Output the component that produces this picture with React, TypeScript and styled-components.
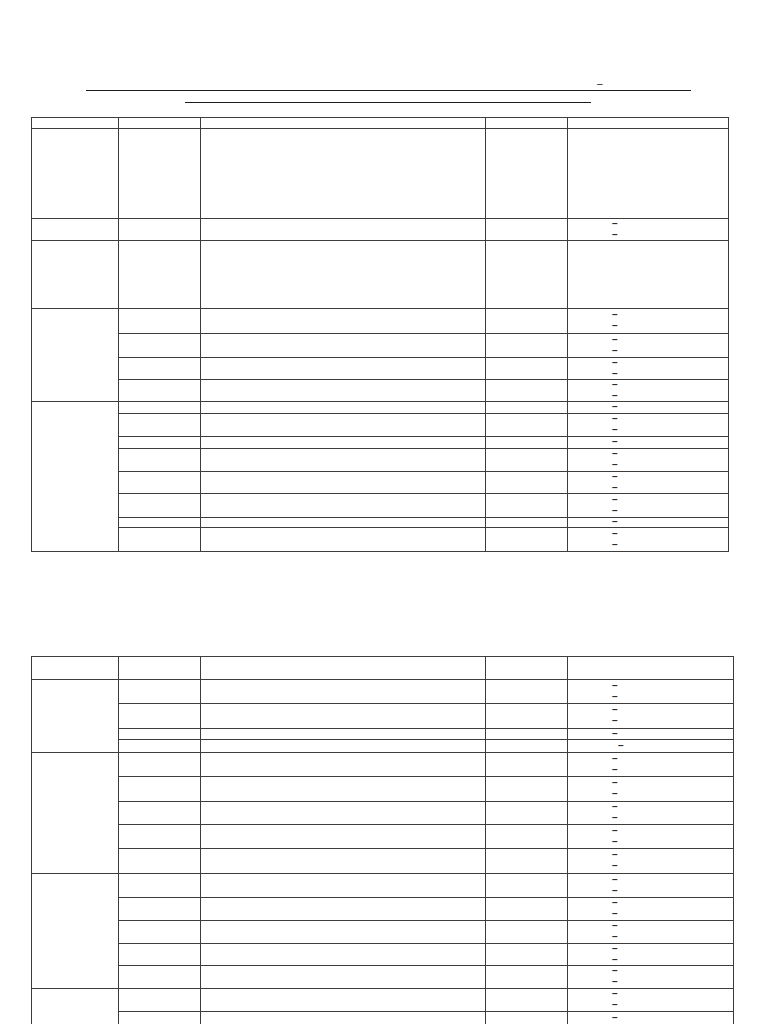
import styled, { createGlobalStyle } from "styled-components";

const GlobalStyle = createGlobalStyle`
  html, body {
    margin: 0;
    padding: 0;
    background: #ffffff;
  }

  body {
    font-family: "Liberation Sans", Arial, sans-serif;
    color: #111111;
  }
`;

interface RowSpec {
  height: number;
  group?: number; // first column spans this many rows; omitted = covered by a span above
  dashes: number;
  shift?: number;
}

const headerRow = (height: number): RowSpec => ({ height, group: 1, dashes: 0 });

const firstTable: RowSpec[] = [
  headerRow(11),
  { height: 90, group: 1, dashes: 0 },
  { height: 22, group: 1, dashes: 2 },
  { height: 68, group: 1, dashes: 0 },
  { height: 25, group: 4, dashes: 2 },
  { height: 24, dashes: 2 },
  { height: 22, dashes: 2 },
  { height: 22, dashes: 2 },
  { height: 12, group: 8, dashes: 1 },
  { height: 23, dashes: 2 },
  { height: 12, dashes: 1 },
  { height: 23, dashes: 2 },
  { height: 22, dashes: 2 },
  { height: 24, dashes: 2 },
  { height: 10, dashes: 1 },
  { height: 24, dashes: 2 },
];

const secondTable: RowSpec[] = [
  headerRow(23),
  { height: 24, group: 4, dashes: 2 },
  { height: 25, dashes: 2 },
  { height: 11, dashes: 1 },
  { height: 13, dashes: 1, shift: 6 },
  { height: 24, group: 5, dashes: 2 },
  { height: 25, dashes: 2 },
  { height: 23, dashes: 2 },
  { height: 24, dashes: 2 },
  { height: 25, dashes: 2 },
  { height: 24, group: 5, dashes: 2 },
  { height: 23, dashes: 2 },
  { height: 23, dashes: 2 },
  { height: 22, dashes: 2 },
  { height: 23, dashes: 2 },
  { height: 23, group: 2, dashes: 2 },
  { height: 24, dashes: 1 },
];

function ScheduleTable({ rows, lastWidth }: { rows: RowSpec[]; lastWidth: number }) {
  return (
    <Grid $rows={rows.map((r) => r.height)} $lastWidth={lastWidth}>
      {rows.map((row, i) => (
        <RowCells key={i} row={row} />
      ))}
    </Grid>
  );
}

function RowCells({ row }: { row: RowSpec }) {
  return (
    <>
      {row.group ? <Cell $span={row.group} /> : null}
      <Cell />
      <Cell />
      <Cell />
      <DashCell $shift={row.shift ?? 0} $top={row.dashes === 1 && row.height > 20}>
        {Array.from({ length: row.dashes }).map((_, i) => (
          <Dash key={i}>–</Dash>
        ))}
      </DashCell>
    </>
  );
}

export default function App() {
  return (
    <>
      <GlobalStyle />
      <Page>
        <TitleLine $width={605} $indent={55} $height={12}>
          <TitleDash>–</TitleDash>
        </TitleLine>
        <TitleLine $width={406} $indent={154} $height={11} />

        <TableWrap $top={14}>
          <ScheduleTable rows={firstTable} lastWidth={161} />
        </TableWrap>

        <TableWrap $top={104}>
          <ScheduleTable rows={secondTable} lastWidth={166} />
        </TableWrap>
      </Page>
    </>
  );
}

const Page = styled.div`
  padding: 80px 0 0 31px;
  width: 768px;
  box-sizing: border-box;
`;

const TitleLine = styled.div<{ $width: number; $indent: number; $height: number }>`
  width: ${(p) => p.$width}px;
  height: ${(p) => p.$height}px;
  margin-left: ${(p) => p.$indent}px;
  border-bottom: 1px solid #1c1c1c;
  font-size: 10px;
  line-height: ${(p) => p.$height}px;
`;

const TitleDash = styled.span`
  display: block;
  padding-left: 511px;
  margin-top: -2px;
  color: #222;
`;

const TableWrap = styled.div<{ $top: number }>`
  margin-top: ${(p) => p.$top}px;
`;

const Grid = styled.div<{ $rows: number[]; $lastWidth: number }>`
  display: grid;
  grid-template-columns: 87px 82px 285px 82px ${(p) => p.$lastWidth}px;
  grid-template-rows: ${(p) => p.$rows.map((h) => `${h}px`).join(" ")};
  width: max-content;
  border-top: 1px solid #3c3c3c;
  border-left: 1px solid #3c3c3c;
`;

const Cell = styled.div<{ $span?: number }>`
  box-sizing: border-box;
  border-right: 1px solid #3c3c3c;
  border-bottom: 1px solid #3c3c3c;
  grid-row: span ${(p) => p.$span ?? 1};
`;

const DashCell = styled(Cell)<{ $shift: number; $top: boolean }>`
  display: flex;
  flex-direction: column;
  justify-content: ${(p) => (p.$top ? "flex-start" : "center")};
  padding-top: ${(p) => (p.$top ? 1 : 0)}px;
  padding-left: ${(p) => 44 + p.$shift}px;
  font-size: 10px;
  overflow: visible;
`;

const Dash = styled.div`
  height: 11px;
  line-height: 9px;
  color: #2a2a2a;
  font-weight: 700;
  flex: none;
`;
